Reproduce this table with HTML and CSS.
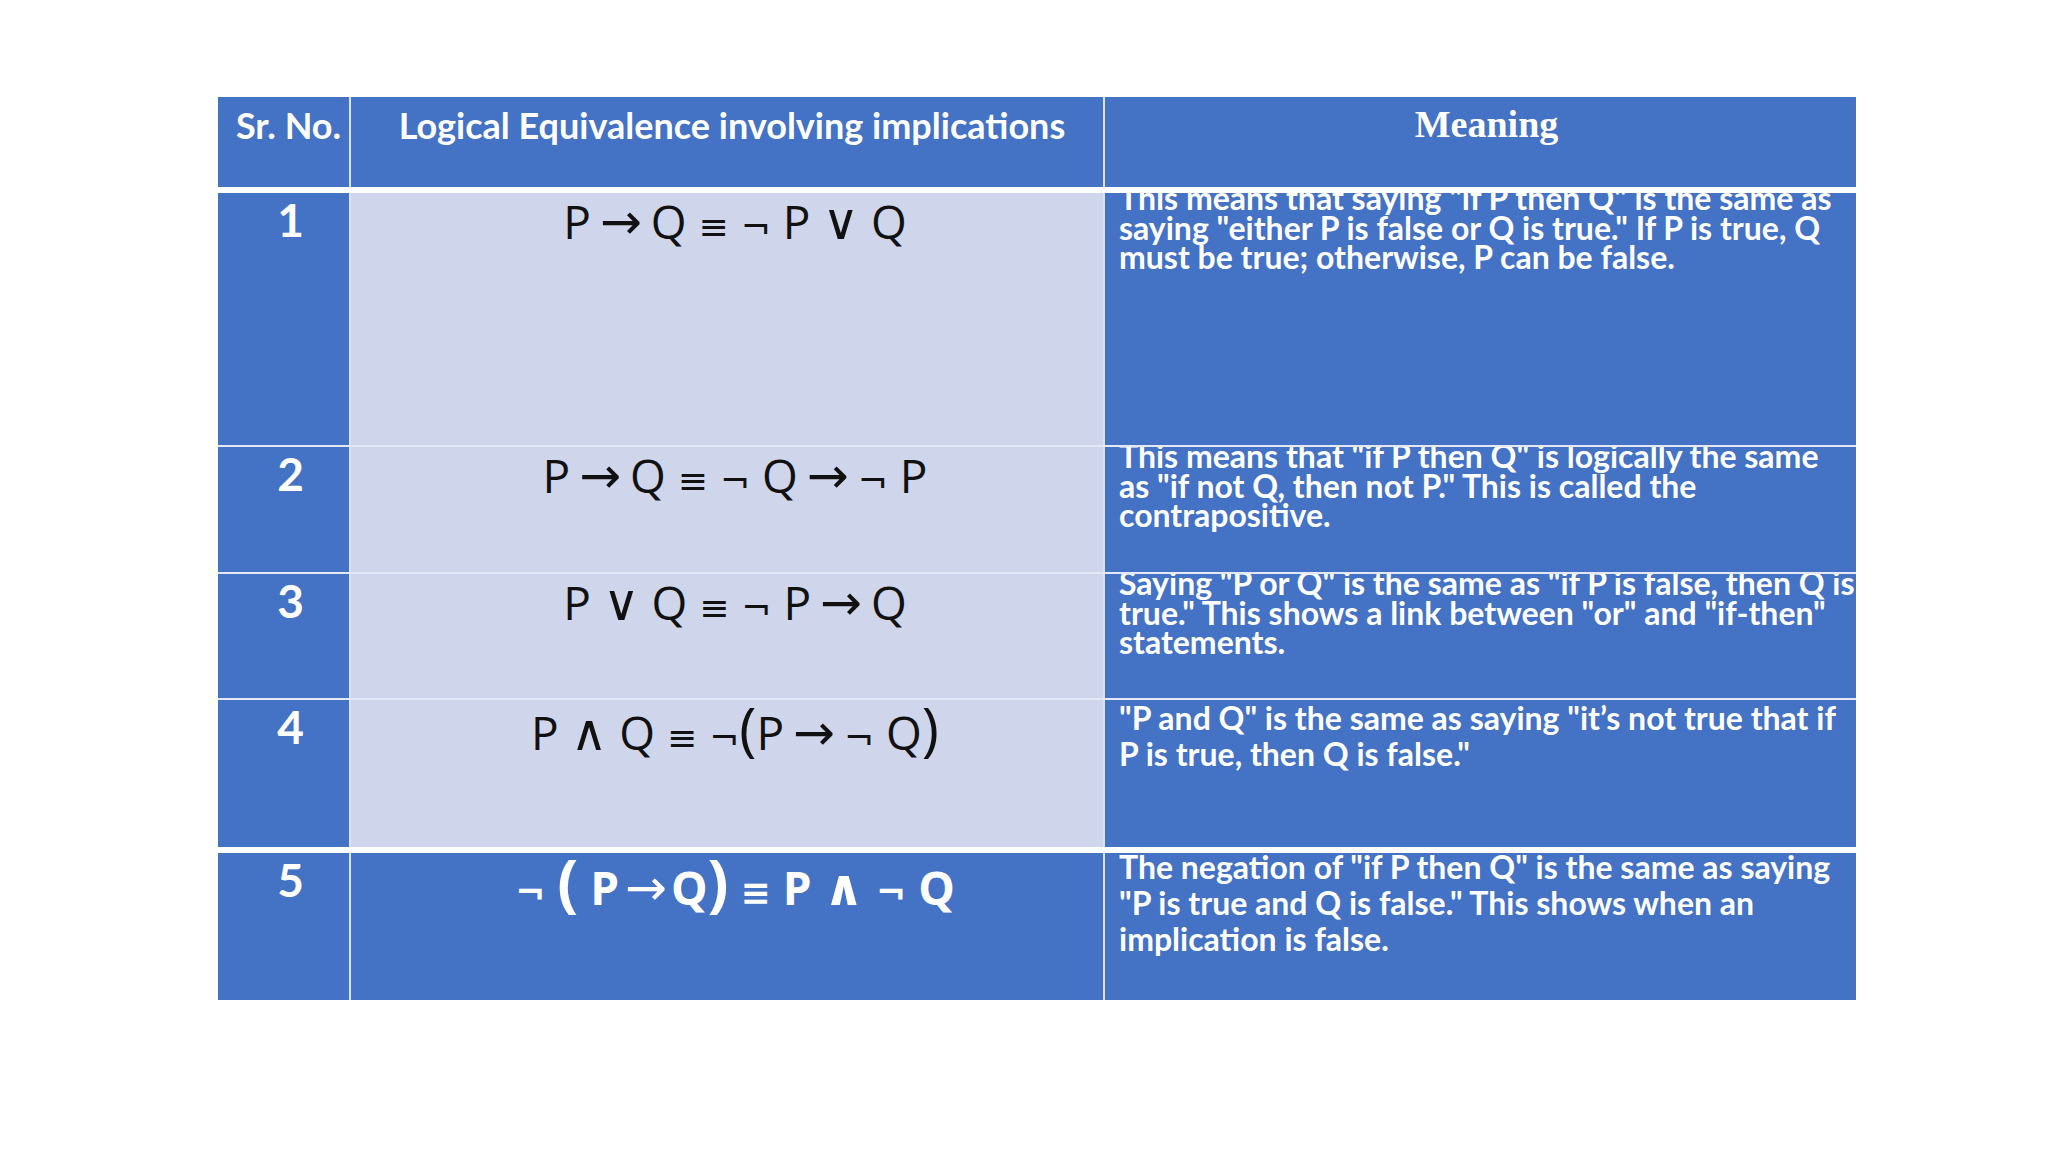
FILE: index.html
```html
<!DOCTYPE html>
<html>
<head>
<meta charset="utf-8">
<link rel="stylesheet" href="styles.css">
</head>
<body>
<div class="table">
  <div class="row head">
    <div class="cell c-num">Sr. No.</div>
    <div class="cell c-eq">Logical Equivalence involving implications</div>
    <div class="cell c-mean">Meaning</div>
  </div>
  <div class="row r1 thick">
    <div class="cell num">1</div>
    <div class="cell eq light">P <span class="arr">→</span> Q <span class="op">≡</span> <span class="op">¬</span> P <span class="lg">∨</span> Q</div>
    <div class="cell mean tight shift"><span>This means that saying "if P then Q" is the same as</span><span>saying "either P is false or Q is true." If P is true, Q</span><span>must be true; otherwise, P can be false.</span></div>
  </div>
  <div class="row r2 thin">
    <div class="cell num">2</div>
    <div class="cell eq light">P <span class="arr">→</span> Q <span class="op">≡</span> <span class="op">¬</span> Q <span class="arr">→</span> <span class="op">¬</span> P</div>
    <div class="cell mean tight up"><span>This means that "if P then Q" is logically the same</span><span>as "if not Q, then not P." This is called the</span><span>contrapositive.</span></div>
  </div>
  <div class="row r3 thin">
    <div class="cell num">3</div>
    <div class="cell eq light">P <span class="lg">∨</span> Q <span class="op">≡</span> <span class="op">¬</span> P <span class="arr">→</span> Q</div>
    <div class="cell mean tight up"><span>Saying "P or Q" is the same as "if P is false, then Q is</span><span>true." This shows a link between "or" and "if-then"</span><span>statements.</span></div>
  </div>
  <div class="row r4 thin">
    <div class="cell num">4</div>
    <div class="cell eq light">P <span class="lg">∧</span> Q <span class="op">≡</span> <span class="op">¬</span><span class="paren">(</span>P <span class="arr">→</span> <span class="op">¬</span> Q<span class="paren">)</span></div>
    <div class="cell mean loose"><span>"P and Q" is the same as saying "it’s not true that if</span><span>P is true, then Q is false."</span></div>
  </div>
  <div class="row r5 thick">
    <div class="cell num">5</div>
    <div class="cell eq dark"><span class="op">¬</span> <span class="paren big">(</span> P <span class="arr tightarr">→</span>Q<span class="paren big">)</span> <span class="op">≡</span> P <span class="lg">∧</span> <span class="op">¬</span> Q</div>
    <div class="cell mean loose up5"><span>The negation of "if P then Q" is the same as saying</span><span>"P is true and Q is false." This shows when an</span><span>implication is false.</span></div>
  </div>
</div>
</body>
</html>
```

FILE: styles.css
```css
html, body {
  margin: 0;
  padding: 0;
  background: #ffffff;
}
body {
  width: 2048px;
  height: 1152px;
  overflow: hidden;
  font-family: Lato, "Noto Sans", sans-serif;
}
.table {
  margin: 97px 0 0 218px;
  width: 1638px;
  display: flex;
  flex-direction: column;
}
.row {
  display: grid;
  grid-template-columns: 131px 752px 751px;
  column-gap: 2px;
  background: #dde2f0;
}
.row.thick { border-top: 6px solid #ffffff; }
.row.thin { border-top: 2px solid #e4e8f4; }
.head { height: 90px; }
.r1 { height: 252px; }
.r2 { height: 125px; }
.r3 { height: 124px; }
.r4 { height: 147px; }
.r5 { height: 147px; }
.cell {
  background: #4472c4;
  color: #ffffff;
  overflow: hidden;
  box-sizing: border-box;
}
.cell.light { background: #cfd5ea; color: #111111; }
.head .cell {
  font-weight: 700;
  font-size: 36px;
  line-height: 40px;
  padding-top: 8px;
  padding-left: 10px;
  text-align: center;
}
.head .c-mean {
  font-family: "Liberation Serif", serif;
  font-size: 38px;
  padding-top: 7px;
  padding-left: 12px;
}
.num {
  font-weight: 700;
  font-size: 46px;
  line-height: 54px;
  padding-top: 0;
  text-align: center;
  padding-left: 14px;
}
.eq {
  font-family: "Open Sans", "DejaVu Sans", sans-serif;
  font-size: 46px;
  line-height: 56px;
  padding-top: 0;
  text-align: center;
  padding-left: 16px;
  white-space: nowrap;
}
.eq .op {
  font-family: "DejaVu Sans", sans-serif;
  font-size: 36px;
}
.eq .arr {
  font-family: "DejaVu Sans", sans-serif;
  font-size: 50px;
  font-weight: 400;
  margin: 0 -3px;
}
.eq .arr.tightarr { margin: 0 4px 0 -6px; }
.eq .lg {
  font-family: "DejaVu Sans", sans-serif;
  font-size: 50px;
  font-weight: 400;
}
.eq .paren { font-size: 58px; font-weight: 400; }
.eq.dark { font-weight: 700; }
.eq.dark .lg { font-weight: 700; }
.eq .paren.big { font-size: 62px; font-weight: 700; }
.mean {
  font-weight: 700;
  font-size: 32px;
  padding-left: 14px;
  display: flex;
  flex-direction: column;
  white-space: nowrap;
}
.mean.tight { line-height: 29.5px; }
.mean.tight.shift span:first-child { margin-top: -10px; }
.mean.tight.up span:first-child { margin-top: -6px; }
.mean.loose { line-height: 36px; padding-top: 0; }
.mean.loose.up5 span:first-child { margin-top: -4px; }
```
